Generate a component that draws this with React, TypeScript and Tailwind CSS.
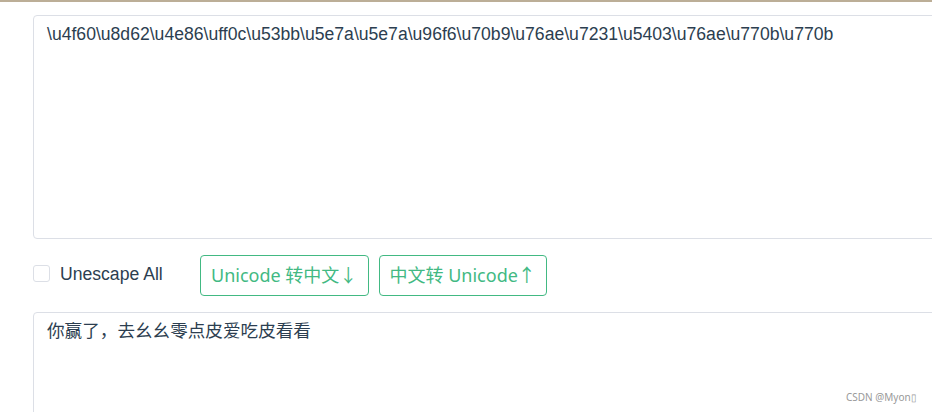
import React from "react";

export default function App() {
  const sans = { fontFamily: '"Liberation Sans", Arial, "Noto Sans CJK SC", sans-serif' };
  return (
    <div className="relative w-[932px] h-[412px] overflow-hidden bg-white" style={sans}>
      <div className="h-[2px] bg-[#bcae97]" />
      <div className="pl-[33px] pt-[13px] flex flex-col gap-[16px]">
        <div className="w-[1000px] h-[224px] border border-[#dcdfe6] rounded-[4px] px-[13px] pt-[4.5px] text-[17.6px] leading-[26px] text-[#2c3e50]">
          \u4f60\u8d62\u4e86\uff0c\u53bb\u5e7a\u5e7a\u96f6\u70b9\u76ae\u7231\u5403\u76ae\u770b\u770b
        </div>
        <div className="flex items-center h-[41px]">
          <div className="flex items-center -mt-[3px]">
            <span className="w-[17px] h-[17px] border border-[#dcdfe6] rounded-[3px] bg-white" />
            <span className="ml-[10px] text-[17.6px] text-[#2c3e50]">Unescape All</span>
          </div>
          <button className="ml-[37px] w-[169px] h-[41px] border border-[#42b983] rounded-[4px] text-[#42b983] text-[18px] flex items-center justify-center bg-white" style={{ fontFamily: '"Noto Sans", "Noto Sans CJK SC", sans-serif' }}>
            Unicode 转中文↓
          </button>
          <button className="ml-[10px] w-[168px] h-[41px] border border-[#42b983] rounded-[4px] text-[#42b983] text-[18px] flex items-center justify-center bg-white" style={{ fontFamily: '"Noto Sans", "Noto Sans CJK SC", sans-serif' }}>
            中文转 Unicode↑
          </button>
        </div>
        <div className="w-[1000px] h-[200px] border border-[#dcdfe6] rounded-[4px] px-[13px] pt-[4px] text-[17.6px] leading-[26px] text-[#2c3e50]" style={{ fontFamily: '"Noto Sans CJK SC", sans-serif' }}>
          你赢了，去幺幺零点皮爱吃皮看看
        </div>
      </div>
      <div className="absolute left-[846px] top-[390px] text-[10px] text-[#999999]" style={{ fontFamily: '"Noto Sans", sans-serif' }}>
        CSDN @Myon▯
      </div>
    </div>
  );
}
